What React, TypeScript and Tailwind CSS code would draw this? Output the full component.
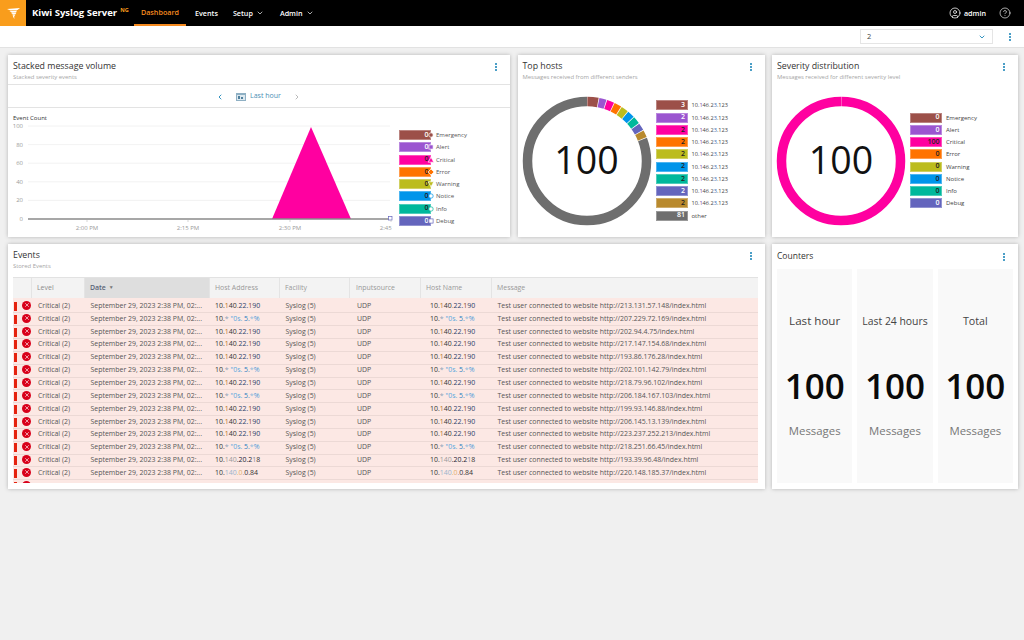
import { ChevronDown, ChevronLeft, ChevronRight, CircleHelp, CircleUser, X } from 'lucide-react'

const severities = [
  { name: 'Emergency', color: '#9c5049', light: true },
  { name: 'Alert', color: '#9b55d0', light: true },
  { name: 'Critical', color: '#ff00a0', light: false },
  { name: 'Error', color: '#ff7300', light: false },
  { name: 'Warning', color: '#bcbc1e', light: false },
  { name: 'Notice', color: '#0095ea', light: false },
  { name: 'Info', color: '#00b89c', light: false },
  { name: 'Debug', color: '#6465bd', light: true },
]

const hostColors = [...severities.map((s) => s.color), '#b98a2e']

const rows = [
  ['a', '213.131.57.148'],
  ['b', '207.229.72.169'],
  ['a', '202.94.4.75'],
  ['a', '217.147.154.68'],
  ['a', '193.86.176.28'],
  ['b', '202.101.142.79'],
  ['a', '218.79.96.102'],
  ['b', '206.184.167.103'],
  ['a', '199.93.146.88'],
  ['a', '206.145.13.139'],
  ['a', '223.237.252.213'],
  ['b', '218.251.66.45'],
  ['c', '193.39.96.48'],
  ['d', '220.148.185.37'],
]

const counters = [
  { label: 'Last hour', size: 'text-[11.6px]' },
  { label: 'Last 24 hours', size: 'text-[10.4px]' },
  { label: 'Total', size: 'text-[10.7px]' },
]

function Kebab() {
  return (
    <div className="flex flex-col gap-[1px]">
      <span className="h-[2px] w-[2px] rounded-full bg-[#0f7fb5]" />
      <span className="h-[2px] w-[2px] rounded-full bg-[#0f7fb5]" />
      <span className="h-[2px] w-[2px] rounded-full bg-[#0f7fb5]" />
    </div>
  )
}

function CardTitle({ title, sub }: { title: string; sub: string }) {
  return (
    <div className="flex items-start justify-between pl-[5px] pr-[13px] pt-[5px]">
      <div>
        <div className="text-[8.8px] leading-[13px] text-[#333]">{title}</div>
        <div className="text-[5.9px] leading-[8px] text-[#a5a5a5]">{sub}</div>
      </div>
      <div className="pt-[3px]">
        <Kebab />
      </div>
    </div>
  )
}

function Ip({ kind }: { kind: string }) {
  if (kind === 'b') {
    return (
      <span>
        10.<span className="text-[#8aa0b8]">*</span>
        <span className="text-[#59a9de]"> "0s. </span>
        <span className="text-[#2f7fc0]">5.</span>
        <span className="text-[#8ab8dc]">*</span>
        <span className="text-[#4a9ad8]">%</span>
      </span>
    )
  }
  if (kind === 'c') {
    return (
      <span>
        10.<span className="text-[#9a9a9a]">140</span>.<span className="text-[#223]">20.2</span>
        <span className="text-[#7a8a9a]">1</span>8
      </span>
    )
  }
  if (kind === 'd') {
    return (
      <span>
        10.<span className="text-[#9ab4cc]">140</span>
        <span className="text-[#e2b070]">.0</span>
        <span className="text-[#88a]">.</span>0.84
      </span>
    )
  }
  return (
    <span>
      10.<span className="text-[#b5701e]">1</span>40
      <span className="text-[#c58a3a]">.</span>
      <span className="text-[#2a3f6a]">22.</span>
      <span className="text-[#8a4a20]">1</span>
      <span className="text-[#2a3f6a]">90</span>
    </span>
  )
}

function HostIp() {
  return (
    <span className="text-[5.6px]">
      10.<span className="text-[#7a3fa0]">1</span>46
      <span className="text-[#c98a2a]">.</span>2<span className="text-[#3a6ab0]">3</span>.123
    </span>
  )
}

function Donut({ segments }: { segments: { color: string; value: number }[] }) {
  const r = 59.5
  const c = 2 * Math.PI * r
  let offset = 0
  return (
    <div className="relative h-[130px] w-[130px] shrink-0">
      <svg width="130" height="130" viewBox="0 0 130 130">
        <g transform="rotate(-90 65 65)">
          {segments.map((s, i) => {
            const len = (s.value / 100) * c
            const el = (
              <circle
                key={i}
                cx="65"
                cy="65"
                r={r}
                fill="none"
                stroke={s.color}
                strokeWidth="9.5"
                strokeDasharray={`${len - 0.7} ${c - len + 0.7}`}
                strokeDashoffset={-offset - 0.35}
              />
            )
            offset += len
            return el
          })}
        </g>
      </svg>
      <div className="absolute inset-0 flex items-center justify-center text-[37.5px] text-[#111]">100</div>
    </div>
  )
}

function BarRow({ color, value, light, children }: { color: string; value: string; light: boolean; children: React.ReactNode }) {
  return (
    <div className="flex h-[12.25px] items-center">
      <div
        className="flex h-[10px] w-[32px] items-center justify-end border border-white/30 pr-[1.5px] text-[7px] font-semibold"
        style={{ backgroundColor: color, color: light ? '#fff' : '#222' }}
      >
        {value}
      </div>
      <div className="ml-[4px] whitespace-nowrap pt-[1px] text-[6px] text-[#444]">{children}</div>
    </div>
  )
}

// the little series marker that sits on the end of each chart legend bar
function Marker({ index, color }: { index: number; color: string }) {
  const shapes = [
    <circle key="0" cx="4" cy="4" r="2.2" />,
    <rect key="1" x="1.9" y="1.9" width="4.2" height="4.2" />,
    <polygon key="2" points="4,1.2 6.8,6.2 1.2,6.2" />,
    <polygon key="3" points="4,1 7,4 4,7 1,4" />,
    <polygon key="4" points="1.2,1.8 6.8,1.8 4,6.8" />,
    <circle key="5" cx="4" cy="4" r="2.2" />,
    <circle key="6" cx="4" cy="4" r="2.2" />,
    <rect key="7" x="1.9" y="1.9" width="4.2" height="4.2" />,
  ]
  return (
    <svg width="8" height="8" viewBox="0 0 8 8" className="absolute left-[28px] top-[2px]" fill={index > 4 ? '#fff' : color} stroke={index > 4 ? color : '#fff'} strokeWidth="0.7">
      {shapes[index]}
    </svg>
  )
}

function VolumeChart() {
  const grid = [100, 80, 60, 40, 20]
  return (
    <svg width="385" height="128" viewBox="0 0 385 128" className="shrink-0">
      <text x="5" y="11.5" fontSize="6" fill="#333">Event Count</text>
      {grid.map((v, i) => (
        <g key={v}>
          <line x1="20" x2="382" y1={18 + i * 18.6} y2={18 + i * 18.6} stroke="#efefef" strokeWidth="0.8" />
          <text x="15" y={20 + i * 18.6} fontSize="6" fill="#9a9a9a" textAnchor="end">{v}</text>
        </g>
      ))}
      <text x="15" y="113" fontSize="6" fill="#9a9a9a" textAnchor="end">0</text>
      <polygon points="264,111 303,19 343,111" fill="#ff00a0" />
      <line x1="20" x2="382" y1="111" y2="111" stroke="#8a8a8a" strokeWidth="1.5" />
      <rect x="380.5" y="108.5" width="3.5" height="3.5" fill="#fff" stroke="#6465bd" strokeWidth="0.7" />
      {[
        ['2:00 PM', 79],
        ['2:15 PM', 180],
        ['2:30 PM', 282],
        ['2:45 PM', 383],
      ].map(([t, x]) => (
        <g key={t}>
          <line x1={x} x2={x} y1="112" y2="114" stroke="#bbb" strokeWidth="0.6" />
          <text x={x} y="121.5" fontSize="6" fill="#9a9a9a" textAnchor="middle">{t}</text>
        </g>
      ))}
    </svg>
  )
}

const rowGrid = 'grid grid-cols-[19px_53px_125px_70px_70px_71px_71px_266px] items-center'

function RowMark() {
  return (
    <div className="flex h-full items-center pl-[1px]">
      <span className="h-[9px] w-[3px] bg-[#e5230f]" />
      <span className="-mt-[2px] ml-[5px] flex h-[9px] w-[9px] items-center justify-center rounded-full bg-[#d8001a]">
        <X className="h-[6px] w-[6px] text-white" strokeWidth={2.5} />
      </span>
    </div>
  )
}

export default function App() {
  const hostSegments = [
    ...hostColors.map((color, i) => ({ color, value: i === 0 ? 3 : 2 })),
    { color: '#6e6e6e', value: 81 },
  ]

  return (
    <div className="min-h-[640px] bg-[#f0f0f0] font-['Open_Sans',sans-serif]">
      <header className="flex h-[26px] items-stretch bg-black text-[7.2px] font-semibold text-white">
        <div className="flex w-[26px] items-center justify-center bg-[#f99d1c]">
          <svg width="13" height="11" viewBox="0 0 13 11" fill="#fff">
            <path d="M0 1 L13 0 L10.5 2 L3.5 2.6 Z" />
            <path d="M2.5 3.2 L10 2.6 L9 4.4 L5 4.8 Z" />
            <path d="M4.2 5.2 L9.4 4.8 L8.2 6.4 L6 6.8 Z" />
            <path d="M5.6 7.2 L8.2 6.9 L7.2 8.6 L7.4 11 L6.2 9 Z" />
          </svg>
        </div>
        <div className="ml-[6px] flex w-[102px] items-center">
          <span className="text-[9.5px] font-bold">Kiwi Syslog Server</span>
          <span className="mb-[6px] ml-[3px] text-[5.5px] font-bold text-[#f99d1c]">NG</span>
        </div>
        <div className="flex w-[52px] items-center justify-center border-b-2 border-[#f58a1f] text-[#f58a1f]">Dashboard</div>
        <div className="ml-[9px] flex items-center">Events</div>
        <div className="ml-[15px] flex items-center gap-[3px]">
          Setup <ChevronDown className="h-[8px] w-[8px]" />
        </div>
        <div className="ml-[16px] flex items-center gap-[3px]">
          Admin <ChevronDown className="h-[8px] w-[8px]" />
        </div>
        <div className="ml-auto flex items-center gap-[3px]">
          <CircleUser className="h-[12px] w-[12px]" strokeWidth={1.5} />
          admin
        </div>
        <div className="ml-[13px] mr-[13px] flex items-center">
          <CircleHelp className="h-[12px] w-[12px]" strokeWidth={1.3} />
        </div>
      </header>

      <div className="flex h-[22px] items-center justify-end border-b border-[#e2e2e2] bg-white pr-[13px]">
        <div className="flex h-[15px] w-[133px] items-center justify-between border border-[#e5e5e5] pl-[6px] pr-[6px] text-[7.5px] text-[#444]">
          2 <ChevronDown className="h-[8px] w-[8px] text-[#0f7fb5]" strokeWidth={2.5} />
        </div>
        <div className="ml-[16px]">
          <Kebab />
        </div>
      </div>

      <div className="flex gap-[7.5px] pl-[8px] pr-[6px] pt-[7px]">
        <section className="h-[182px] w-[502px] bg-white shadow-[0_0_4px_rgba(0,0,0,0.25)]">
          <div className="h-[30px] border-b border-[#e3e3e3]">
            <CardTitle title="Stacked message volume" sub="Stacked severity events" />
          </div>
          <div className="flex h-[23px] items-center justify-center border-b border-[#e3e3e3] pr-[1px] pt-[1px] text-[7px] text-[#4b8fb5]">
            <ChevronLeft className="h-[8px] w-[8px] text-[#0f7fb5]" strokeWidth={2.5} />
            <svg width="10" height="8" viewBox="0 0 10 8" className="ml-[12px]">
              <rect width="10" height="8" fill="#8fb0c4" />
              <rect x="1" y="2" width="8" height="5" fill="#dce8ef" />
              <rect x="2" y="3" width="2" height="3" fill="#4f7f9c" />
              <rect x="5" y="4" width="2" height="2" fill="#4f7f9c" />
            </svg>
            <span className="ml-[4px]">Last hour</span>
            <ChevronRight className="ml-[12px] h-[8px] w-[8px] text-[#999]" strokeWidth={2} />
          </div>
          <div className="flex">
            <VolumeChart />
            <div className="relative z-10 bg-white pl-[6px] pt-[21px]">
              {severities.map((s, i) => (
                <div key={s.name} className="relative">
                  <BarRow color={s.color} value="0" light={i < 2 || i === 7}>
                    <span className="pl-[1px] text-[#555]">{s.name}</span>
                  </BarRow>
                  <Marker index={i} color={s.color} />
                </div>
              ))}
            </div>
          </div>
        </section>

        <section className="h-[182px] w-[247px] bg-white shadow-[0_0_4px_rgba(0,0,0,0.25)]">
          <CardTitle title="Top hosts" sub="Messages received from different senders" />
          <div className="flex items-center pl-[4px] pt-[14.5px]">
            <Donut segments={hostSegments} />
            <div className="ml-[4px]">
              {hostColors.map((color, i) => (
                <BarRow key={color} color={color} value={i === 0 ? '3' : '2'} light={i < 2 || i === 7 || i === 0}>
                  <HostIp />
                </BarRow>
              ))}
              <BarRow color="#6e6e6e" value="81" light>
                other
              </BarRow>
            </div>
          </div>
        </section>

        <section className="h-[182px] w-[246px] bg-white shadow-[0_0_4px_rgba(0,0,0,0.25)]">
          <CardTitle title="Severity distribution" sub="Messages received for different severity level" />
          <div className="flex items-center pl-[4px] pt-[14.5px]">
            <Donut segments={[{ color: '#ff00a0', value: 100 }]} />
            <div className="ml-[4px]">
              {severities.map((s, i) => (
                <BarRow key={s.name} color={s.color} value={s.name === 'Critical' ? '100' : '0'} light={i < 2 || i === 7}>
                  {s.name}
                </BarRow>
              ))}
            </div>
          </div>
        </section>
      </div>

      <div className="flex gap-[7.5px] pl-[8px] pr-[6px] pt-[7px]">
        <section className="h-[245px] w-[756.5px] bg-white shadow-[0_0_4px_rgba(0,0,0,0.25)]">
          <CardTitle title="Events" sub="Stored Events" />
          <div className="ml-[5px] mt-[7px] h-[206px] w-[745px] overflow-hidden text-[6.95px] text-[#555]">
            <div className={`${rowGrid} h-[21px] border-t border-[#e2e2e2] bg-[#f3f3f3] text-[#999]`}>
              <div className="h-full border-r border-[#e4e4e4]" />
              <div className="flex h-full items-center border-r border-[#e4e4e4] pl-[5px] text-[#8c8c8c]">Level</div>
              <div className="flex h-full items-center gap-[3px] border-r border-[#e4e4e4] bg-[#dedede] pl-[5px] font-semibold text-[#5a6478]">
                Date <span className="text-[5px] text-[#777]">▼</span>
              </div>
              <div className="flex h-full items-center border-r border-[#e4e4e4] pl-[5px]">Host Address</div>
              <div className="flex h-full items-center border-r border-[#e4e4e4] pl-[5px]">Facility</div>
              <div className="flex h-full items-center border-r border-[#e4e4e4] pl-[6px]">Inputsource</div>
              <div className="flex h-full items-center border-r border-[#e4e4e4] pl-[5px]">Host Name</div>
              <div className="flex h-full items-center pl-[5px]">Message</div>
            </div>
            <div className="bg-[#fce8e4] pt-[2.5px]">
              {rows.map(([kind, ip], i) => (
                <div key={i} className={`${rowGrid} h-[12.85px] border-b border-[#ecd9d5] leading-none`}>
                  <RowMark />
                  <div className="pl-[6px]">Critical (2)</div>
                  <div className="whitespace-nowrap pl-[5.5px]">September 29, 2023 2:38 PM, 02:...</div>
                  <div className="pl-[5px] text-[#333]">
                    <Ip kind={kind} />
                  </div>
                  <div className="pl-[5.5px]">Syslog (5)</div>
                  <div className="pl-[7px]">UDP</div>
                  <div className="pl-[9px] text-[#333]">
                    <Ip kind={kind} />
                  </div>
                  <div className="whitespace-nowrap pl-[5.5px]">Test user connected to website http://{ip}/index.html</div>
                </div>
              ))}
              <div className={`${rowGrid} h-[12.85px]`}>
                <RowMark />
              </div>
            </div>
          </div>
        </section>

        <section className="h-[245px] w-[246px] bg-white shadow-[0_0_4px_rgba(0,0,0,0.25)]">
          <div className="flex h-[25px] items-center justify-between pl-[5px] pr-[13px] text-[8.5px] text-[#333]">
            Counters <Kebab />
          </div>
          <div className="grid grid-cols-3 gap-[5px] pl-[5px] pr-[5px]">
            {counters.map((c) => (
              <div key={c.label} className="flex h-[214px] flex-col items-center bg-[#f9f9f9] pt-[44px]">
                <div className={`${c.size} h-[16px] whitespace-nowrap leading-[16px] text-[#444]`}>{c.label}</div>
                <div className="mt-[33px] h-[48px] text-[35px] font-semibold leading-[48px] text-[#0a0a0a]">100</div>
                <div className="mt-[13px] text-[11.4px] leading-[16px] text-[#777]">Messages</div>
              </div>
            ))}
          </div>
        </section>
      </div>
    </div>
  )
}
